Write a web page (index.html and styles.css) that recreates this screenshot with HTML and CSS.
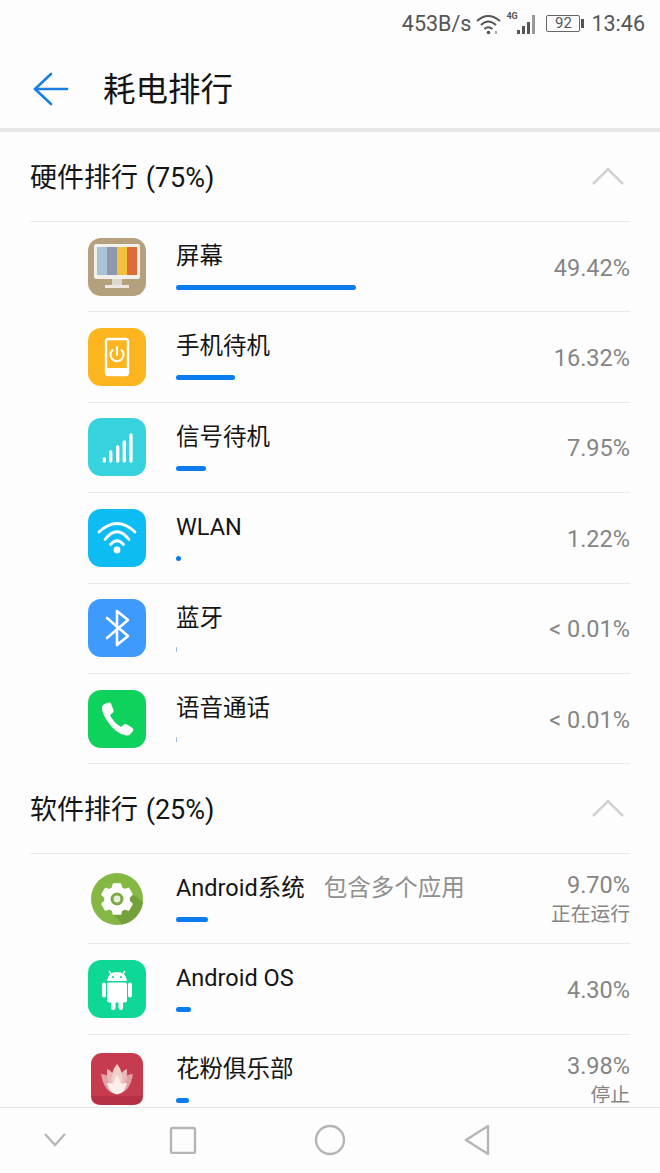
FILE: index.html
```html
<!DOCTYPE html>
<html lang="zh-CN">

<head>
  <meta charset="UTF-8">
  <meta name="viewport" content="width=device-width, initial-scale=1.0">
  <title>耗电排行</title>
  <link rel="stylesheet" href="styles.css">
</head>

<body>
  <div class="phone">

    <!-- status bar -->
    <div class="status-bar">
      <span class="speed">453B/s</span>
      <svg class="st-wifi" width="26" height="22" viewBox="0 0 26 22" fill="none" stroke="#555" stroke-width="2">
        <path d="M1 8 Q12 -2 24 8" />
        <path d="M5 12 Q12 5 20 12" />
        <path d="M8.500 16 Q12 12.500 16.500 16" />
        <circle cx="12.500" cy="19.500" r="1.800" fill="#555" stroke="none" />
        <rect x="19" y="18" width="2" height="3" fill="#aaa" stroke="none" />
      </svg>
      <span class="st-signal">
        <span class="st-4g">4G</span>
        <svg width="22" height="22" viewBox="0 0 22 22" fill="#555">
          <rect x="1" y="17" width="3" height="4" />
          <rect x="6" y="13" width="3" height="8" />
          <rect x="11" y="9" width="3" height="12" />
          <rect x="16" y="2" width="3" height="19" fill="#999" />
        </svg>
      </span>
      <span class="battery"><span class="battery-body">92</span><span class="battery-tip"></span></span>
      <span class="clock">13:46</span>
    </div>

    <!-- title bar -->
    <div class="toolbar">
      <svg class="back" width="36" height="34" viewBox="0 0 36 34" fill="none" stroke="#1a7fe0" stroke-width="2.600" stroke-linecap="round" stroke-linejoin="round">
        <path d="M18 2 L2 17 L18 32" />
        <path d="M2 17 H34" />
      </svg>
      <h1>耗电排行</h1>
    </div>

    <div class="content">
      <div class="section-head">
        <h2>硬件排行 (75%)</h2>
        <svg class="chevron" width="34" height="20" viewBox="0 0 34 20" fill="none" stroke="#d2d2d2" stroke-width="2.600">
          <path d="M2 18 L17 3 L32 18" />
        </svg>
      </div>
      <ul class="list">
        <li class="row">
          <svg class="app-icon" viewBox="0 0 58 58">
            <rect width="58" height="58" rx="13" fill="#b5a07d" />
            <rect x="6" y="6" width="46" height="35" rx="2" fill="#f2f0ea" />
            <rect x="9" y="9" width="10" height="28" fill="#a9c3d6" />
            <rect x="19" y="9" width="10" height="28" fill="#8d98ad" />
            <rect x="29" y="9" width="10" height="28" fill="#efc13f" />
            <rect x="39" y="9" width="10" height="28" fill="#dd6a38" />
            <rect x="24" y="41" width="10" height="7" fill="#dcd8cd" />
            <rect x="17" y="47" width="24" height="3" fill="#ece8de" />
          </svg>
          <div class="info">
            <div class="name">屏幕</div>
            <div class="bar bar-screen"></div>
          </div>
          <div class="value">49.42%</div>
        </li>
        <li class="row">
          <svg class="app-icon" viewBox="0 0 58 58">
            <rect width="58" height="58" rx="13" fill="#fdb51f" />
            <rect x="18" y="11" width="22" height="36" rx="2.500" fill="none" stroke="#fff" stroke-width="2.400" />
            <rect x="18" y="40" width="22" height="7" rx="1.500" fill="#fff" />
            <path d="M24.500 22 A6.500 6.500 0 1 0 33.500 22" fill="none" stroke="#fff" stroke-width="2" stroke-linecap="round" />
            <path d="M29 19 V27" stroke="#fff" stroke-width="2" stroke-linecap="round" />
          </svg>
          <div class="info">
            <div class="name">手机待机</div>
            <div class="bar bar-standby"></div>
          </div>
          <div class="value">16.32%</div>
        </li>
        <li class="row">
          <svg class="app-icon" viewBox="0 0 58 58">
            <rect width="58" height="58" rx="13" fill="#36d2de" />
            <g stroke="#fff" stroke-width="3.400" stroke-linecap="round">
              <path d="M16.300 41 V43" />
              <path d="M22.700 34 V43" />
              <path d="M29.700 29 V43" />
              <path d="M36.300 24 V43" />
              <path d="M43 17 V43" />
            </g>
          </svg>
          <div class="info">
            <div class="name">信号待机</div>
            <div class="bar bar-signal"></div>
          </div>
          <div class="value">7.95%</div>
        </li>
        <li class="row">
          <svg class="app-icon" viewBox="0 0 58 58">
            <rect width="58" height="58" rx="13" fill="#0dbcf2" />
            <g fill="none" stroke="#fff" stroke-width="2.800" stroke-linecap="round">
              <path d="M11 23 Q29 6 47 23" />
              <path d="M17 30.500 Q29 15 41 30.500" />
              <path d="M22.500 35.500 Q29 28 35.500 35.500" />
            </g>
            <circle cx="29" cy="41" r="3.400" fill="#fff" />
          </svg>
          <div class="info">
            <div class="name">WLAN</div>
            <div class="bar bar-wlan"></div>
          </div>
          <div class="value">1.22%</div>
        </li>
        <li class="row">
          <svg class="app-icon" viewBox="0 0 58 58">
            <rect width="58" height="58" rx="13" fill="#3f9bfb" />
            <path d="M19 19 L40 37 L29 46 V12 L40 21 L19 39" fill="none" stroke="#fff" stroke-width="2.600" stroke-linejoin="round" stroke-linecap="round" />
          </svg>
          <div class="info">
            <div class="name">蓝牙</div>
            <div class="bar bar-tiny"></div>
          </div>
          <div class="value">&lt; 0.01%</div>
        </li>
        <li class="row">
          <svg class="app-icon" viewBox="0 0 58 58">
            <rect width="58" height="58" rx="13" fill="#0ed25c" />
            <path d="M16.500 14 L20.500 12.500 Q22.500 12 23 13.500 L25.500 20 Q26 22 24.500 23 L22 25 Q25 32 33 37 L36 34.500 Q37.500 33.500 39 34.500 L44.500 38 Q46 39 45 41 L42.500 44 Q41 46 38 45.500 Q27 43 20 32 Q13 22 14 17 Q14.500 15 16.500 14 Z" fill="#fff" />
          </svg>
          <div class="info">
            <div class="name">语音通话</div>
            <div class="bar bar-tiny"></div>
          </div>
          <div class="value">&lt; 0.01%</div>
        </li>
      </ul>

      <div class="section-head section-soft">
        <h2>软件排行 (25%)</h2>
        <svg class="chevron" width="34" height="20" viewBox="0 0 34 20" fill="none" stroke="#d2d2d2" stroke-width="2.600">
          <path d="M2 18 L17 3 L32 18" />
        </svg>
      </div>
      <ul class="list">
        <li class="row">
          <svg class="app-icon" viewBox="0 0 58 58">
            <circle cx="29" cy="29" r="26" fill="#85b843" />
            <path d="M39 20 L55 32 A26 26 0 0 1 34 54.500 L20 38 Z" fill="#74a23a" />
            <path d="M25.500 14 H32.500 L33.500 18 L36.500 19.800 L40.500 18.500 L44 24.500 L41 27.500 V31 L44 34 L40.500 40 L36.500 38.700 L33.500 40.500 L32.500 44 H25.500 L24.500 40.500 L21.500 38.700 L17.500 40 L14 34 L17 31 V27.500 L14 24.500 L17.500 18.500 L21.500 19.800 L24.500 18 Z" fill="#fff" stroke="#fff" stroke-width="1.600" stroke-linejoin="round" />
            <circle cx="29" cy="29" r="6.500" fill="#7fa948" />
            <circle cx="29" cy="29" r="3.400" fill="#e8efd8" />
          </svg>
          <div class="info">
            <div class="name">Android系统<span class="note">包含多个应用</span></div>
            <div class="bar bar-system"></div>
          </div>
          <div class="value two-line">9.70%<small>正在运行</small></div>
        </li>
        <li class="row">
          <svg class="app-icon" viewBox="0 0 58 58">
            <rect width="58" height="58" rx="13" fill="#0fd795" />
            <path d="M19 21 Q20 12 29 12 Q38 12 39 21 Z" fill="#fff" />
            <path d="M21 11 L23 14 M37 11 L35 14" stroke="#fff" stroke-width="1.400" />
            <rect x="19" y="22.500" width="20" height="20" rx="2" fill="#fff" />
            <rect x="14" y="22.500" width="4" height="15" rx="2" fill="#fff" />
            <rect x="40" y="22.500" width="4" height="15" rx="2" fill="#fff" />
            <rect x="23" y="40" width="4.500" height="10" rx="2.200" fill="#fff" />
            <rect x="30.500" y="40" width="4.500" height="10" rx="2.200" fill="#fff" />
            <circle cx="25" cy="17" r="1.100" fill="#0fd795" />
            <circle cx="33" cy="17" r="1.100" fill="#0fd795" />
          </svg>
          <div class="info">
            <div class="name">Android OS</div>
            <div class="bar bar-os"></div>
          </div>
          <div class="value">4.30%</div>
        </li>
        <li class="row">
          <svg class="app-icon" viewBox="0 0 58 58">
            <rect x="3" y="3" width="52" height="52" rx="11" fill="#c63c4e" />
            <path d="M3 46 H55 Q55 55 44 55 H14 Q3 55 3 46 Z" fill="#b53043" />
            <path d="M13 24 Q20 24 24 30 L29 44 Q16 43 13 24 Z" fill="#e3a0a4" />
            <path d="M45 24 Q38 24 34 30 L29 44 Q42 43 45 24 Z" fill="#e3a0a4" />
            <path d="M19 19 Q25 21 28 30 L29 44 Q18 36 19 19 Z" fill="#eab7b6" />
            <path d="M39 19 Q33 21 30 30 L29 44 Q40 36 39 19 Z" fill="#eab7b6" />
            <path d="M29 14 Q35 21 34.500 32 Q33 40 29 44 Q25 40 23.500 32 Q23 21 29 14 Z" fill="#f0cfcb" />
            <path d="M29 25 Q32 30 33 34 Q36 33 39 33 Q37 43 29 44.500 Q21 43 19 33 Q22 33 25 34 Q26 30 29 25 Z" fill="#fbefec" />
          </svg>
          <div class="info">
            <div class="name">花粉俱乐部</div>
            <div class="bar bar-club"></div>
          </div>
          <div class="value two-line">3.98%<small>停止</small></div>
        </li>
      </ul>
    </div>

    <!-- android nav keys -->
    <div class="nav-bar">
      <svg width="24" height="16" viewBox="0 0 24 16" fill="none" stroke="#b5b5b5" stroke-width="2.200">
        <path d="M2 2 L12 13 L22 2" />
      </svg>
      <svg width="28" height="28" viewBox="0 0 28 28" fill="none" stroke="#b5b5b5" stroke-width="2.400">
        <rect x="2" y="2" width="24" height="25" rx="1.500" />
      </svg>
      <svg width="32" height="32" viewBox="0 0 32 32" fill="none" stroke="#b5b5b5" stroke-width="2.400">
        <circle cx="16" cy="16" r="14" />
      </svg>
      <svg width="28" height="32" viewBox="0 0 28 32" fill="none" stroke="#b5b5b5" stroke-width="2.400" stroke-linejoin="round">
        <path d="M25 2 V30 L3 16 Z" />
      </svg>
    </div>

  </div>
</body>

</html>
```

FILE: styles.css
```css
* {
  box-sizing: border-box;
}

html,
body {
  margin: 0;
  padding: 0;
  background-color: #fdfdfd;
}

body {
  font-family: Roboto, "Noto Sans CJK SC", sans-serif;
  color: #141414;
}

.phone {
  width: 660px;
  height: 1173px;
  display: flex;
  flex-direction: column;
  overflow: hidden;
}

/* status bar */
.status-bar {
  height: 46px;
  flex: none;
  display: flex;
  justify-content: flex-end;
  align-items: center;
  padding: 1px 15px 0 0;
  color: #555;
  font-size: 21.500px;
}

.speed {
  margin-right: 5px;
}

.st-wifi {
  margin-right: 4px;
}

.st-signal {
  position: relative;
  display: flex;
  padding-left: 10px;
  margin-right: 8px;
}

.st-4g {
  position: absolute;
  left: 0;
  top: -2px;
  font-size: 9px;
  font-weight: 700;
}

.battery {
  display: flex;
  align-items: center;
  margin-right: 7px;
}

.battery-body {
  width: 34px;
  height: 17px;
  border: 1.500px solid #666;
  border-radius: 2px;
  font-size: 15px;
  line-height: 14px;
  text-align: center;
}

.battery-tip {
  width: 3px;
  height: 9px;
  margin-left: 1px;
  background-color: #555;
}

/* title bar */
.toolbar {
  height: 86px;
  flex: none;
  display: flex;
  align-items: center;
  padding: 4px 0 0 33px;
  border-bottom: 4px solid #e6e6e6;
}

.back {
  margin-right: 34px;
}

h1 {
  margin: 2px 0 0;
  font-size: 32.500px;
  font-weight: 400;
  line-height: 1;
}

.content {
  flex: 1;
  min-height: 0;
  overflow: hidden;
}

.section-head {
  height: 90px;
  display: flex;
  justify-content: space-between;
  align-items: center;
  margin: 0 30px;
  padding-bottom: 2px;
  border-bottom: 1.500px solid #e8e8e8;
}

.section-soft {
  height: 89.500px;
}

h2 {
  margin: 0;
  font-size: 27px;
  font-weight: 400;
  word-spacing: 1px;
}

.chevron {
  margin-right: 5px;
}

.list {
  list-style: none;
  margin: 0;
  padding: 0;
}

.row {
  height: 90.400px;
  margin-left: 88px;
  margin-right: 30px;
  display: flex;
  align-items: center;
  border-bottom: 1.500px solid #e8e8e8;
}

.app-icon {
  width: 58px;
  height: 58px;
  flex: none;
  margin-right: 30px;
}

.info {
  flex: 1;
  align-self: stretch;
  padding-top: 17px;
}

.name {
  font-size: 23.500px;
  line-height: 34px;
  white-space: nowrap;
}

.note {
  margin-left: 19px;
  color: #8f8f8f;
}

.bar {
  height: 5px;
  margin-top: 12px;
  border-radius: 3px;
  background-color: #0a7cf0;
}

.bar-screen {
  width: 180px;
}

.bar-standby {
  width: 59px;
}

.bar-signal {
  width: 30px;
}

.bar-wlan {
  width: 5px;
}

.bar-tiny {
  width: 1px;
  background-color: #9db8d6;
}

.bar-system {
  width: 32px;
}

.bar-os {
  width: 15px;
}

.bar-club {
  width: 13px;
}

.value {
  flex: none;
  padding-top: 2px;
  text-align: right;
  color: #858585;
  font-size: 23.500px;
  line-height: 28px;
}

.two-line {
  padding-top: 4px;
}

.value small {
  display: block;
  font-size: 19.750px;
  line-height: 31px;
}

/* android nav keys */
.nav-bar {
  height: 66px;
  flex: none;
  display: grid;
  grid-template-columns: 110px 146px 148px 146px;
  justify-items: center;
  align-items: center;
  padding-bottom: 2px;
  background-color: #fdfdfd;
  border-top: 1.500px solid #e4e4e4;
}
```
